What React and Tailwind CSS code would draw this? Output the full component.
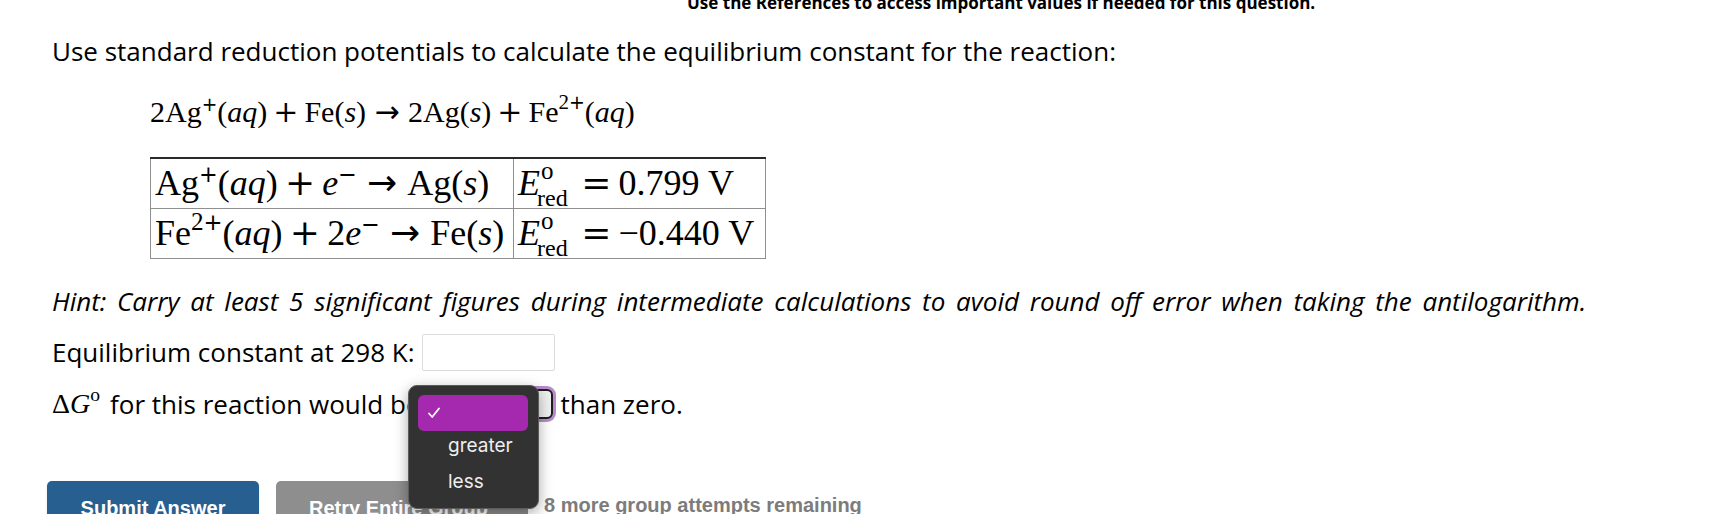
import React from "react";

const math = "font-['Liberation_Serif','Times_New_Roman',serif]";
const sym = "font-['DejaVu_Serif',serif]";

function Sup({ children, sign }) {
  return (
    <span className={`relative -top-[0.6em] text-[0.7em] leading-none ${sign ? "font-['DejaVu_Sans',sans-serif] text-[0.62em]" : ""}`}>
      {children}
    </span>
  );
}

function Op({ children }) {
  return <span className={`${sym} mx-[0.2em]`}>{children}</span>;
}

function Arrow() {
  return <span className="font-['DejaVu_Sans',sans-serif] mx-[0.28em]">→</span>;
}

function Ered() {
  return (
    <>
      <i>E</i>
      <span className="relative inline-block w-[34px] h-0">
        <span className="absolute left-[1px] -top-[33px] text-[25px] leading-[18px]">o</span>
        <span className="absolute -left-[3px] -top-[5px] text-[24px] leading-[16px]">red</span>
      </span>
    </>
  );
}

export default function App() {
  return (
    <div className="relative w-[1736px] h-[514px] overflow-hidden bg-white text-black font-['Open_Sans',sans-serif]">
      <p className="h-[6px] pl-[687px] text-[17px] leading-[6px] font-bold whitespace-nowrap">
        Use the References to access important values if needed for this question.
      </p>

      <div className="pl-[52px] pt-[28px]">
        <p className="text-[26px] leading-[34px]">
          Use standard reduction potentials to calculate the equilibrium constant for the reaction:
        </p>

        <p className={`${math} mt-[26px] ml-[98px] text-[30px] leading-[36px] whitespace-nowrap`}>
          2Ag<Sup sign>+</Sup>(<i>aq</i>)<Op>+</Op>Fe(<i>s</i>)<Arrow />2Ag(<i>s</i>)<Op>+</Op>Fe<Sup>2<span className="font-['DejaVu_Sans',sans-serif] text-[0.9em]">+</span></Sup>(<i>aq</i>)
        </p>

        <table className={`${math} mt-[27px] ml-[98px] border-collapse text-[36px] leading-[40px]`}>
          <tbody>
            <tr>
              <td className="border border-[#8f8f8f] border-t-2 border-t-[#2a2a2a] px-[4px] h-[50px] w-[363px] whitespace-nowrap">
                Ag<Sup sign>+</Sup>(<i>aq</i>)<Op>+</Op><i>e</i><Sup sign>−</Sup><Arrow />Ag(<i>s</i>)
              </td>
              <td className="border border-[#8f8f8f] border-t-2 border-t-[#2a2a2a] px-[4px] h-[50px] w-[252px] whitespace-nowrap">
                <Ered />
                <Op>=</Op>0.799 V
              </td>
            </tr>
            <tr>
              <td className="border border-[#8f8f8f] px-[4px] h-[50px] whitespace-nowrap">
                Fe<Sup>2<span className="font-['DejaVu_Sans',sans-serif] text-[0.9em]">+</span></Sup>(<i>aq</i>)<Op>+</Op>2<i>e</i><Sup sign>−</Sup><Arrow />Fe(<i>s</i>)
              </td>
              <td className="border border-[#8f8f8f] px-[4px] h-[50px] whitespace-nowrap">
                <Ered />
                <Op>=</Op>−0.440 V
              </td>
            </tr>
          </tbody>
        </table>

        <p className="mt-[25px] text-[26px] leading-[34px] italic [word-spacing:4px] whitespace-nowrap">
          Hint: Carry at least 5 significant figures during intermediate calculations to avoid round off error when taking the antilogarithm.
        </p>

        <div className="mt-[16px] flex items-center text-[26px] leading-[34px]">
          <span>Equilibrium constant at 298 K:</span>
          <span className="ml-[7px] w-[133px] h-[37px] border border-[#dcdcdc] rounded-[2px] bg-white"></span>
        </div>

        <div className="mt-[16px] flex items-center text-[26px] leading-[34px]">
          <span className={`${math} text-[28px]`}>
            Δ<i>G</i>
            <Sup>o</Sup>
          </span>
          <span className="ml-[10px]">for this reaction would be</span>
          <span className="ml-[6px] w-[126px] h-[30px] rounded-[6px] border-2 border-[#1e1e1e] bg-[#f0f0f0] ring-[3px] ring-[#b98bcc]"></span>
          <span className="ml-[8px]">than zero.</span>
        </div>

        <div className="mt-[60px] flex items-start font-['Liberation_Sans',Arial,sans-serif] font-bold">
          <button className="w-[212px] h-[44px] -ml-[5px] rounded-[5px] bg-[#275f91] text-white text-[20px] pt-[11px] leading-[24px] shadow">
            Submit Answer
          </button>
          <button className="ml-[17px] w-[252px] h-[44px] rounded-[5px] bg-[#8e8e8e] text-white text-[20px] pt-[11px] leading-[24px] text-left pl-[33px]">
            Retry Entire Group
          </button>
          <span className="ml-[16px] pt-[12px] text-[20px] leading-[24px] text-[#7c7c7c]">
            8 more group attempts remaining
          </span>
        </div>
      </div>

      <div className="absolute left-[408px] top-[385px] w-[131px] h-[124px] rounded-[9px] bg-[#323232] border border-[#5c5c5c] shadow-[0_4px_14px_rgba(0,0,0,0.35)] p-[9px] font-['Inter','Liberation_Sans',sans-serif] text-white">
        <div className="h-[36px] w-[110px] rounded-[6px] bg-[#a429ae] flex items-center pl-[9px]">
          <svg width="14" height="14" viewBox="0 0 14 14" fill="none">
            <path d="M2 7.5l3.2 3.5L12 2.5" stroke="white" strokeWidth="1.8" strokeLinecap="round" strokeLinejoin="round" />
          </svg>
        </div>
        <div className="pl-[30px] mt-[3px] text-[19px] leading-[24px] text-[#eeeeee]">greater</div>
        <div className="pl-[30px] mt-[12px] text-[19px] leading-[24px] text-[#eeeeee]">less</div>
      </div>
    </div>
  );
}
